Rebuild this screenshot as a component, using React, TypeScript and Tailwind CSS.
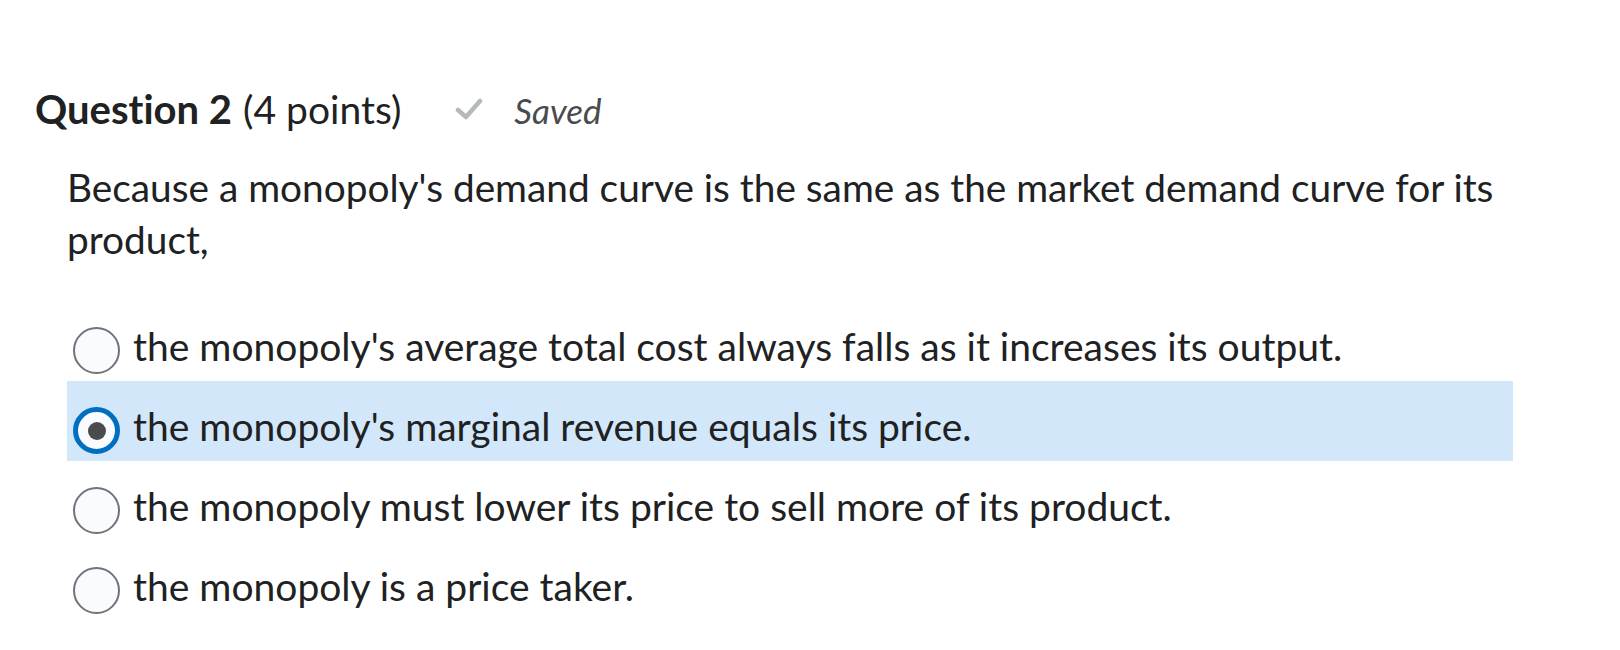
import React from "react";

const options = [
  "the monopoly's average total cost always falls as it increases its output.",
  "the monopoly's marginal revenue equals its price.",
  "the monopoly must lower its price to sell more of its product.",
  "the monopoly is a price taker.",
];

function Radio({ checked }: { checked: boolean }) {
  if (checked) {
    return (
      <span className="mt-[26px] flex h-[47px] w-[47px] shrink-0 items-center justify-center rounded-full border-[5px] border-[#006fbf] bg-[#f9fbff]">
        <span className="h-[18px] w-[18px] rounded-full bg-[#494c4e]"></span>
      </span>
    );
  }
  return (
    <span className="mt-[26px] h-[47px] w-[47px] shrink-0 rounded-full border-2 border-[#6e7477] bg-[#f9fbff]"></span>
  );
}

export default function App() {
  const selected = 1;
  return (
    <div className="min-h-screen bg-white text-[#202122] font-['Lato',sans-serif] [font-variant-ligatures:none]">
      {/* Header */}
      <div className="flex items-baseline pl-[35px] pt-[85px] text-[39px] leading-[1.2]">
        <span className="text-[40px] font-bold">Question 2</span>
        <span className="ml-[11px]">(4 points)</span>
        <svg
          className="ml-[54px] h-[24px] w-[28px] self-center"
          viewBox="0 0 28 24"
          fill="none"
        >
          <polyline
            points="3,13 11,20 25,4"
            stroke="#b4b9bc"
            strokeWidth="4.5"
            strokeLinecap="round"
            strokeLinejoin="round"
          />
        </svg>
        <span className="ml-[31px] text-[35px] italic text-[#494c4e]">Saved</span>
      </div>

      {/* Question body */}
      <div className="ml-[67px] w-[1446px]">
        <p className="mt-[28px] text-[38.8px] leading-[52px]">
          Because a monopoly's demand curve is the same as the market demand curve for its product,
        </p>

        <div className="mt-[36px]">
          {options.map((opt, i) => (
            <div
              key={i}
              className={
                "flex h-[80px] items-start pl-[6px] " +
                (i === selected ? "bg-[#d2e7fa]" : "")
              }
            >
              <Radio checked={i === selected} />
              <span className="ml-[13px] mt-[22px] text-[39px] leading-[1.2]">{opt}</span>
            </div>
          ))}
        </div>
      </div>
    </div>
  );
}
